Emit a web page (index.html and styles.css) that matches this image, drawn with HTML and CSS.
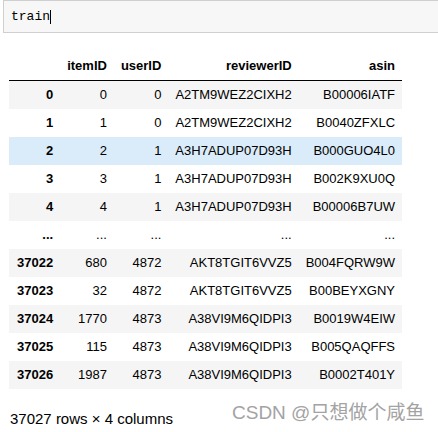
FILE: index.html
```html
<!DOCTYPE html>
<html>
<head>
<meta charset="utf-8">
<link rel="stylesheet" href="styles.css">
</head>
<body>
<div class="cell-input"><span class="code">train</span><span class="caret"></span></div>
<div class="output">
<table class="df">
<thead>
<tr><th></th><th>itemID</th><th>userID</th><th>reviewerID</th><th>asin</th></tr>
</thead>
<tbody>
<tr><th>0</th><td>0</td><td>0</td><td>A2TM9WEZ2CIXH2</td><td>B00006IATF</td></tr>
<tr><th>1</th><td>1</td><td>0</td><td>A2TM9WEZ2CIXH2</td><td>B0040ZFXLC</td></tr>
<tr class="hover"><th>2</th><td>2</td><td>1</td><td>A3H7ADUP07D93H</td><td>B000GUO4L0</td></tr>
<tr><th>3</th><td>3</td><td>1</td><td>A3H7ADUP07D93H</td><td>B002K9XU0Q</td></tr>
<tr><th>4</th><td>4</td><td>1</td><td>A3H7ADUP07D93H</td><td>B00006B7UW</td></tr>
<tr><th>...</th><td>...</td><td>...</td><td>...</td><td>...</td></tr>
<tr><th>37022</th><td>680</td><td>4872</td><td>AKT8TGIT6VVZ5</td><td>B004FQRW9W</td></tr>
<tr><th>37023</th><td>32</td><td>4872</td><td>AKT8TGIT6VVZ5</td><td>B00BEYXGNY</td></tr>
<tr><th>37024</th><td>1770</td><td>4873</td><td>A38VI9M6QIDPI3</td><td>B0019W4EIW</td></tr>
<tr><th>37025</th><td>115</td><td>4873</td><td>A38VI9M6QIDPI3</td><td>B005QAQFFS</td></tr>
<tr><th>37026</th><td>1987</td><td>4873</td><td>A38VI9M6QIDPI3</td><td>B0002T401Y</td></tr>
</tbody>
</table>
<p class="shape">37027 rows × 4 columns</p>
</div>
<div class="watermark">CSDN @只想做个咸鱼</div>
</body>
</html>
```

FILE: styles.css
```css
html, body {
  margin: 0;
  padding: 0;
  background: #ffffff;
  width: 438px;
  height: 432px;
  overflow: hidden;
  position: relative;
}

.cell-input {
  margin-left: 3px;
  height: 31px;
  border: 1px solid #cfcfcf;
  border-right: none;
  background: #f7f7f7;
  display: flex;
  align-items: center;
  padding-left: 7px;
}

.code {
  font-family: "Liberation Mono", monospace;
  font-size: 13px;
  color: #000;
  line-height: 14px;
}

.caret {
  display: inline-block;
  width: 1px;
  height: 14px;
  background: #000;
}

.output {
  padding-left: 9px;
  padding-top: 19px;
}

.df {
  border-collapse: collapse;
  border-spacing: 0;
  font-family: "Liberation Sans", Arial, sans-serif;
  font-size: 13px;
  color: #000;
}

.df th, .df td {
  text-align: right;
  vertical-align: middle;
  padding: 7px 7px;
  line-height: 14px;
  white-space: nowrap;
}

.df th {
  font-weight: bold;
}

.df thead th {
  vertical-align: bottom;
  border-bottom: 1px solid #000;
}

.df tbody th:first-child {
  padding-left: 8px;
}

.df tbody tr:nth-child(odd) {
  background: #f5f5f5;
}

.df tbody tr.hover {
  background: #daebfa;
}

.shape {
  margin: 21px 0 0 1px;
  font-family: "Liberation Sans", Arial, sans-serif;
  font-size: 15px;
  line-height: 17px;
  color: #000;
}

.watermark {
  position: absolute;
  left: 232px;
  top: 402px;
  font-family: "Liberation Sans", Arial, "Noto Sans CJK SC", sans-serif;
  font-size: 19px;
  line-height: 22px;
  color: #a3a3a3;
  text-shadow: 0 0 1px #ffffff, 1px 1px 0 #ffffff;
}
```
